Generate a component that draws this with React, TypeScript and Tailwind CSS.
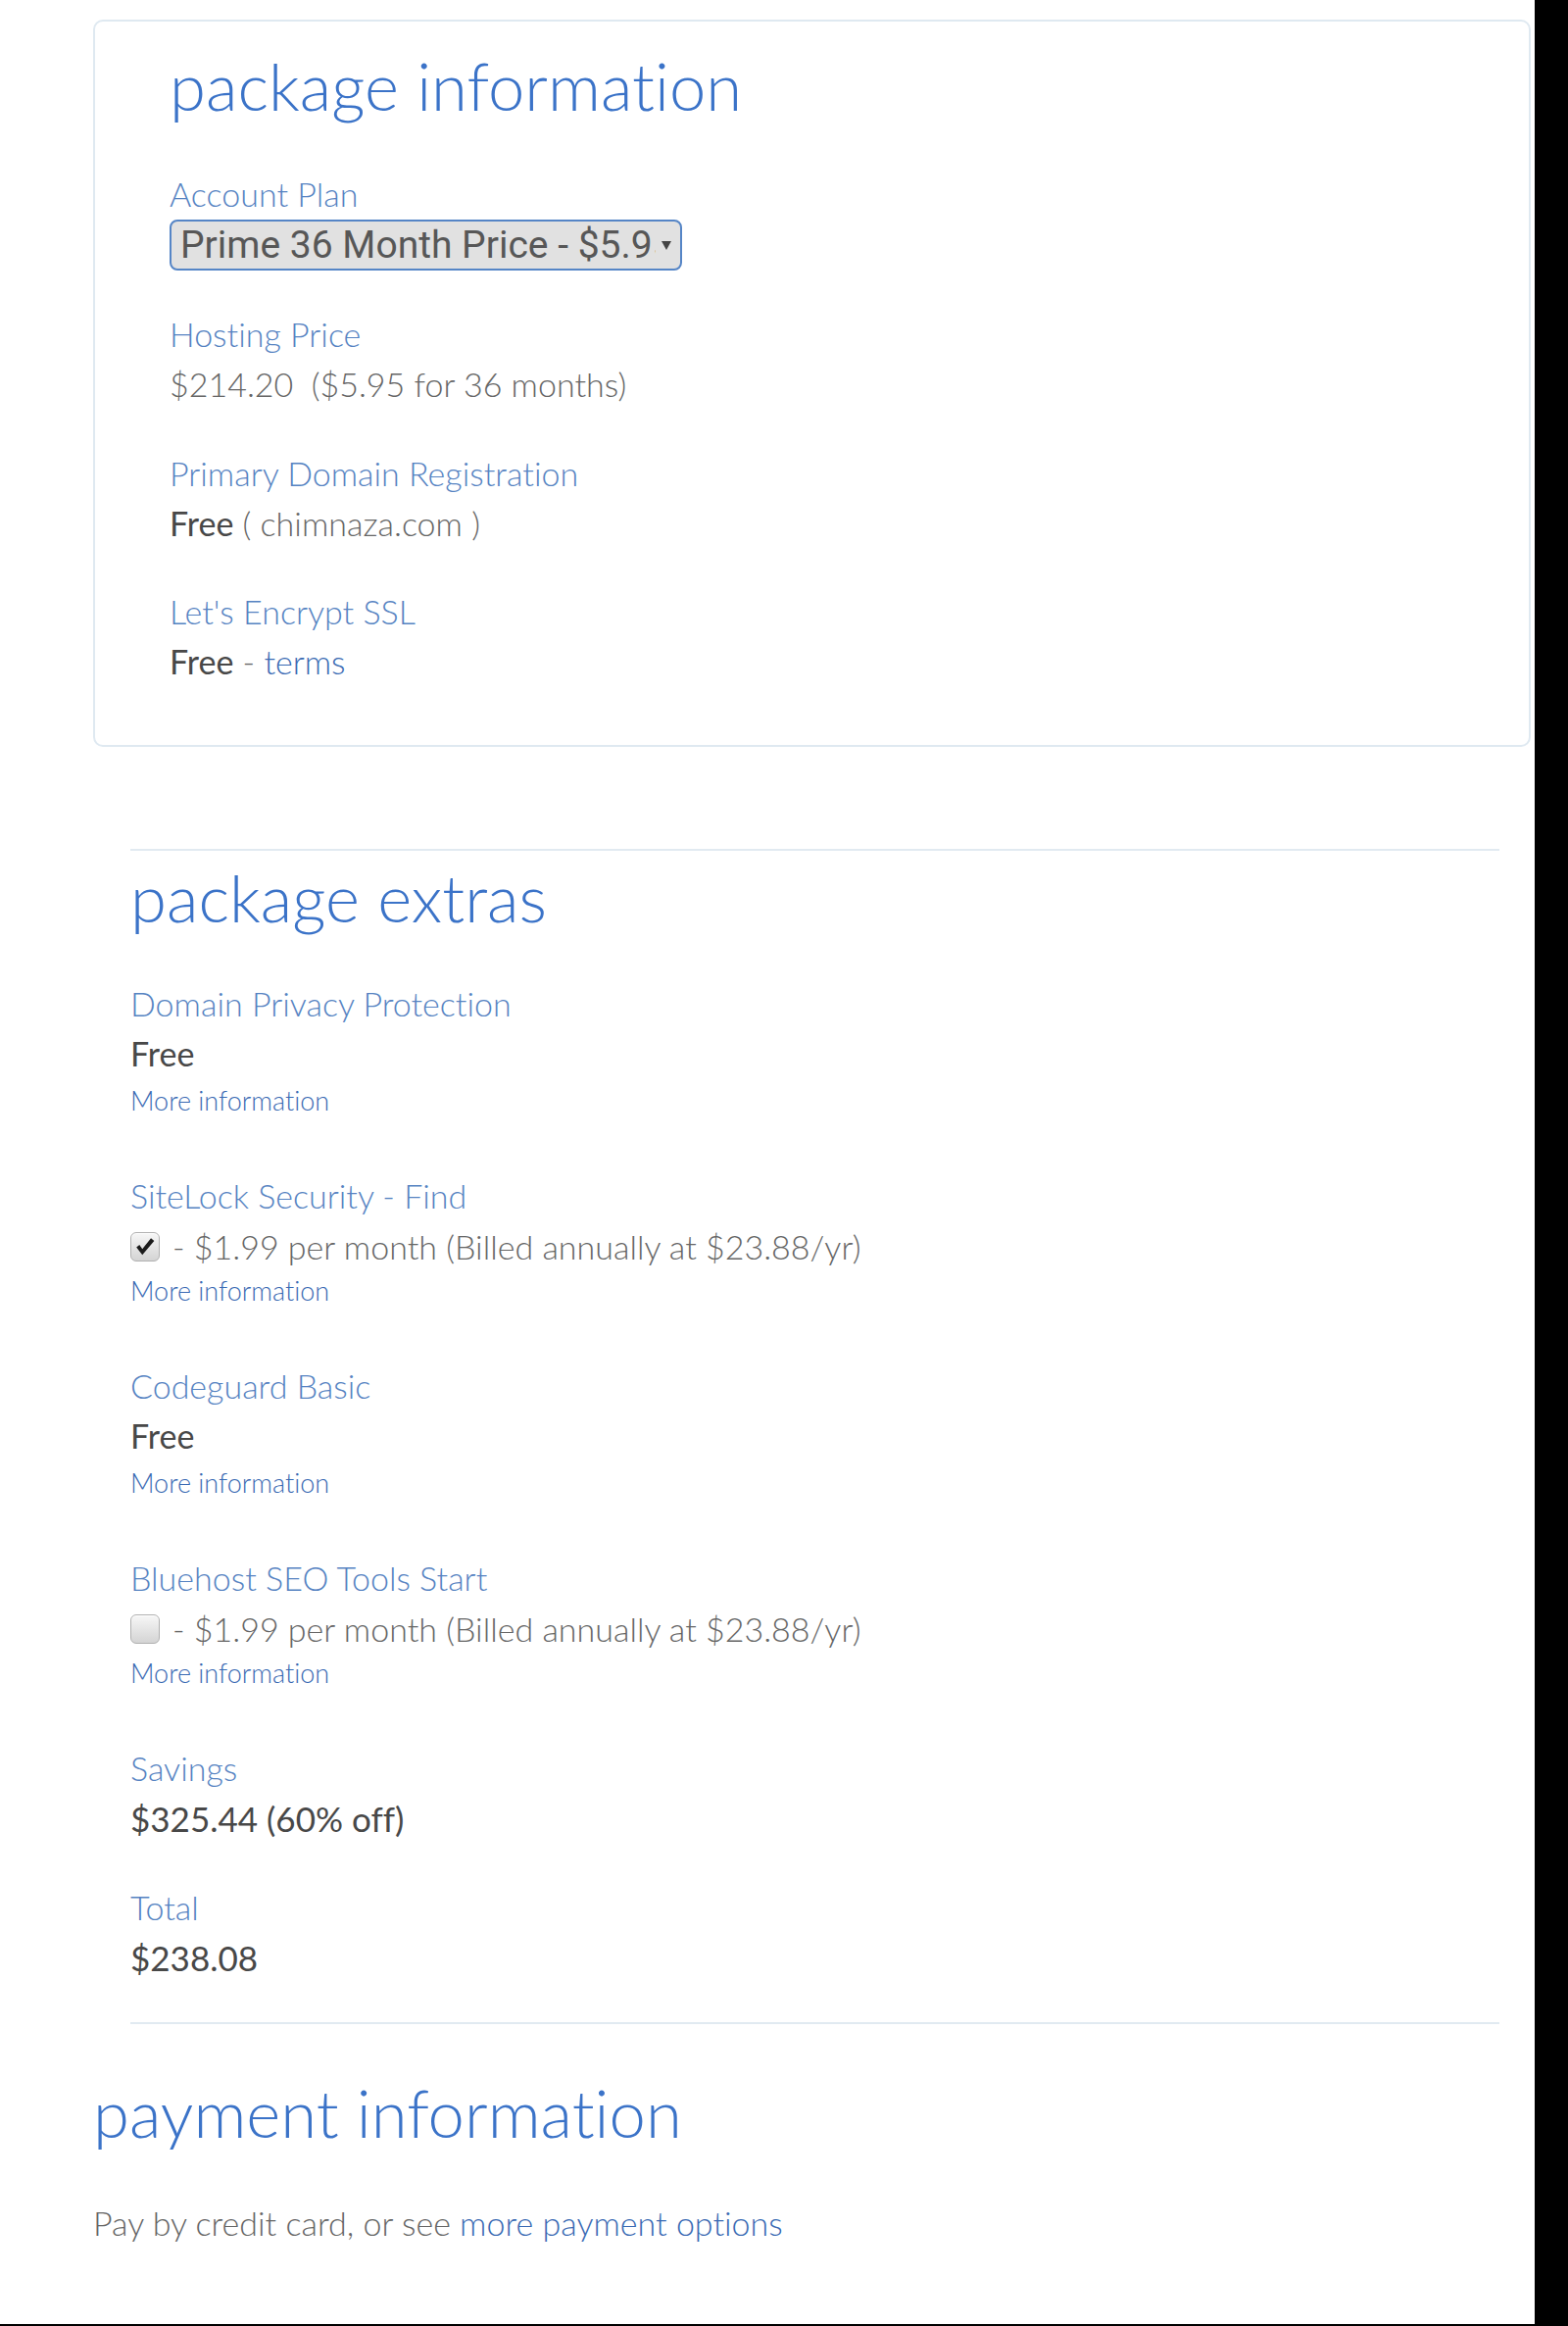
import type { ReactNode } from 'react'

const label = 'text-[34px] leading-[52px] font-light text-[#5683c2]'
const value = 'text-[34px] leading-[50px] font-light text-[#666]'
const strong = 'font-normal text-[#484848]'
const link = 'text-[#3a6ab3]'
const heading = 'text-[67px] leading-[80px] font-light text-[#3b73c8]'

function Field({ title, children, className = '' }: { title: string; children: ReactNode; className?: string }) {
  return (
    <div className={className}>
      <div className={label}>{title}</div>
      {children}
    </div>
  )
}

function Checkbox({ checked }: { checked: boolean }) {
  return (
    <span className="inline-flex size-[30px] shrink-0 items-center justify-center rounded-[6px] border border-[#b0b0b0] bg-gradient-to-b from-[#f7f7f7] to-[#d4d4d4] shadow-[inset_0_1px_0_#fff]">
      {checked && (
        <svg viewBox="0 0 20 20" className="size-[22px]">
          <path d="M2 10.5 L7.5 17.5 L18.5 4.5 L15.5 2 L7.5 12 L4.8 8.2 Z" fill="#1c1c1c" />
        </svg>
      )}
    </span>
  )
}

function Extra({ title, checkbox }: { title: string; checkbox?: boolean }) {
  return (
    <div className="mb-[48px]">
      <div className={label}>{title}</div>
      {checkbox === undefined ? (
        <div className={`${value} ${strong}`}>Free</div>
      ) : (
        <div className={`${value} mt-[4px] flex h-[44px] items-center gap-[13px]`}>
          <Checkbox checked={checkbox} />
          <span>- $1.99 per month (Billed annually at $23.88/yr)</span>
        </div>
      )}
      <div className={`text-[27px] leading-[46px] font-light ${link}`}>More information</div>
    </div>
  )
}

export default function App() {
  return (
    <div className="flex h-[2373px] w-[1600px] bg-black font-['Lato',sans-serif] [font-variant-ligatures:none]">
      <div className="h-[2371px] w-[1566px] bg-white pt-[20px]">
        {/* package information card */}
        <section className="ml-[95px] w-[1467px] rounded-[10px] border-2 border-[#dfe9f1] pt-[25px] pb-[60px] pl-[76px]">
          <h2 className={`${heading} mb-[45px]`}>package information</h2>

          <div className={label}>Account Plan</div>
          <div className="flex h-[52px] w-[523px] items-center rounded-[8px] border-2 border-[#5585c6] bg-[#e1e1e1] pl-[9px] font-['Roboto',sans-serif] text-[39px] text-[#575757]">
            <span className="w-[485px] overflow-hidden whitespace-nowrap">Prime 36 Month Price - $5.95/mo</span>
            <span className="ml-[6px] h-0 w-0 border-x-[5px] border-t-[9px] border-x-transparent border-t-[#444]" />
          </div>

          <Field title="Hosting Price" className="mt-[39px]">
            <div className={value}>$214.20&nbsp; ($5.95 for 36 months)</div>
          </Field>

          <Field title="Primary Domain Registration" className="mt-[40px]">
            <div className={value}>
              <span className={strong}>Free</span> ( chimnaza.com )
            </div>
          </Field>

          <Field title="Let's Encrypt SSL" className="mt-[39px]">
            <div className={value}>
              <span className={strong}>Free</span> - <span className={link}>terms</span>
            </div>
          </Field>
        </section>

        {/* package extras */}
        <div className="mt-[104px] ml-[133px] w-[1397px] border-t-2 border-[#e1eaf1]">
          <h2 className={`${heading} mt-[7px] mb-[43px]`}>package extras</h2>

          <Extra title="Domain Privacy Protection" />
          <Extra title="SiteLock Security - Find" checkbox />
          <Extra title="Codeguard Basic" />
          <Extra title="Bluehost SEO Tools Start" checkbox={false} />

          <Field title="Savings">
            <div className={`${value} ${strong} text-[35px]`}>$325.44 (60% off)</div>
          </Field>
          <Field title="Total" className="mt-[40px]">
            <div className={`${value} ${strong} text-[35px]`}>$238.08</div>
          </Field>
        </div>

        {/* payment information */}
        <div className="mt-[41px] ml-[133px] w-[1397px] border-t-2 border-[#e1eaf1]" />
        <div className="ml-[95px]">
          <h2 className={`${heading} mt-[50px] mb-[48px]`}>payment information</h2>
          <p className={value}>
            Pay by credit card, or see <span className={link}>more payment options</span>
          </p>
        </div>
      </div>
    </div>
  )
}
